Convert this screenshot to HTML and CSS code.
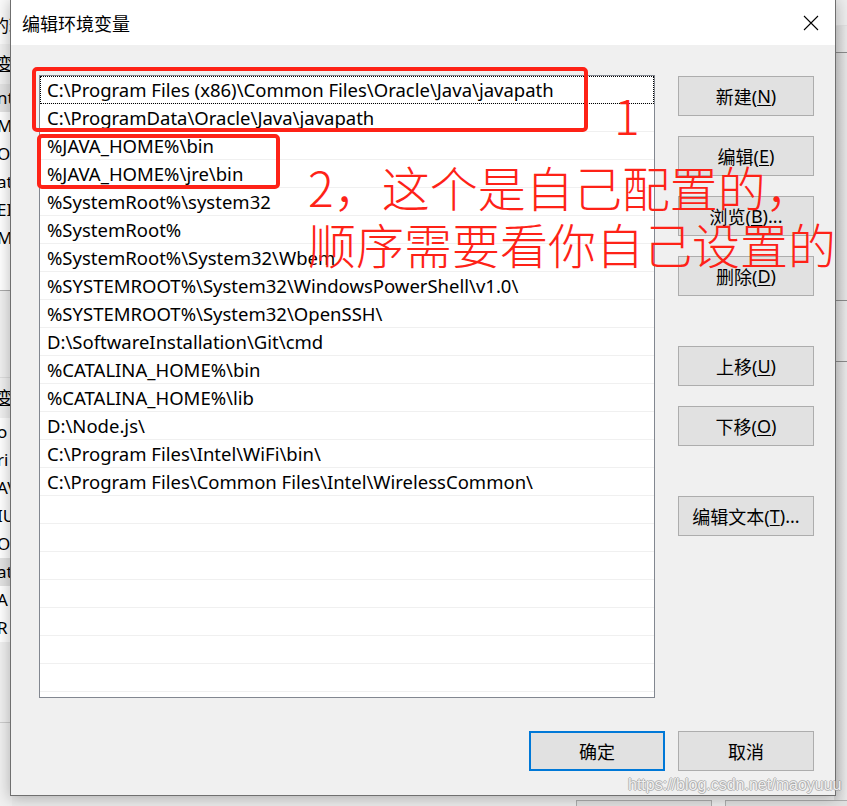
FILE: index.html
```html
<!DOCTYPE html>
<html lang="zh-CN">
<head>
<meta charset="utf-8">
<title>编辑环境变量</title>
<link rel="stylesheet" href="styles.css">
</head>
<body>
<div class="desktop">
  <div class="bg-left">
    <div class="bgl-title">的环境变量</div>
    <div class="bgl-group">变量</div>
    <div class="bgl-rows">
      <div class="bgl-row sel">ntel</div>
      <div class="bgl-row">MC</div>
      <div class="bgl-row">On</div>
      <div class="bgl-row">ath</div>
      <div class="bgl-row">EI</div>
      <div class="bgl-row">MP</div>
    </div>
    <div class="bgl-sep"></div>
    <div class="bgl-sep2"></div>
    <div class="bgl-group2">变量</div>
    <div class="bgl-rows">
      <div class="bgl-row">o</div>
      <div class="bgl-row">ri</div>
      <div class="bgl-row">AV</div>
      <div class="bgl-row">IU</div>
      <div class="bgl-row">OS</div>
      <div class="bgl-row sel">ath</div>
      <div class="bgl-row">A</div>
      <div class="bgl-row">R</div>
    </div>
    <div class="bgl-sep3"></div>
  </div>
  <div class="bg-right">
    <div class="bgr-a"></div>
    <div class="bgr-b"></div>
    <div class="bgr-c"></div>
    <div class="bgr-d"></div>
  </div>
  <div class="bg-bottom">
    <span class="bgbtn"></span>
    <span class="bgbtn"></span>
  </div>

  <div class="dialog">
    <div class="titlebar">
      <span class="title">编辑环境变量</span>
      <svg class="close" width="16" height="16" viewBox="0 0 16 16"><path d="M1 1 L15 15 M15 1 L1 15" stroke="#000" stroke-width="1.1" fill="none"/></svg>
    </div>
    <div class="body">
      <div class="main">
        <div class="listbox">
          <div class="row focus">C:\Program Files (x86)\Common Files\Oracle\Java\javapath</div>
          <div class="row">C:\ProgramData\Oracle\Java\javapath</div>
          <div class="row">%JAVA_HOME%\bin</div>
          <div class="row">%JAVA_HOME%\jre\bin</div>
          <div class="row">%SystemRoot%\system32</div>
          <div class="row">%SystemRoot%</div>
          <div class="row">%SystemRoot%\System32\Wbem</div>
          <div class="row">%SYSTEMROOT%\System32\WindowsPowerShell\v1.0\</div>
          <div class="row">%SYSTEMROOT%\System32\OpenSSH\</div>
          <div class="row">D:\SoftwareInstallation\Git\cmd</div>
          <div class="row">%CATALINA_HOME%\bin</div>
          <div class="row">%CATALINA_HOME%\lib</div>
          <div class="row">D:\Node.js\</div>
          <div class="row">C:\Program Files\Intel\WiFi\bin\</div>
          <div class="row">C:\Program Files\Common Files\Intel\WirelessCommon\</div>
          <div class="row"></div>
          <div class="row"></div>
          <div class="row"></div>
          <div class="row"></div>
          <div class="row"></div>
          <div class="row"></div>
          <div class="row"></div>
        </div>
        <div class="btncol">
          <div class="btn">新建(<u>N</u>)</div>
          <div class="btn">编辑(<u>E</u>)</div>
          <div class="btn">浏览(<u>B</u>)...</div>
          <div class="btn">删除(<u>D</u>)</div>
          <div class="btn spaced">上移(<u>U</u>)</div>
          <div class="btn">下移(<u>O</u>)</div>
          <div class="btn spaced">编辑文本(<u>T</u>)...</div>
        </div>
      </div>
      <div class="footer">
        <div class="btn fbtn default">确定</div>
        <div class="btn fbtn">取消</div>
      </div>
    </div>
  </div>

  <div class="anno box1"></div>
  <div class="anno box2"></div>
  <div class="anno-num">1</div>
  <div class="anno-text">2，这个是自己配置的，<br>顺序需要看你自己设置的</div>
  <div class="watermark">https://blog.csdn.net/maoyuuu</div>
</div>
</body>
</html>
```

FILE: styles.css
```css
html, body {
  margin: 0;
  padding: 0;
}
body {
  width: 847px;
  height: 806px;
  overflow: hidden;
  background: #ececec;
  font-family: "Noto Sans", "Noto Sans CJK SC", sans-serif;
}
.desktop {
  position: relative;
  width: 847px;
  height: 806px;
  overflow: hidden;
  background: #ececec;
}

/* ---- background window fragments ---- */
.bg-left {
  position: absolute;
  left: 0;
  top: 0;
  width: 12px;
  height: 806px;
  overflow: hidden;
  background: #f0f0f0;
  font-size: 17px;
  color: #000;
}
.bgl-title {
  height: 44px;
  line-height: 52px;
  margin-left: -8px;
  white-space: nowrap;
  background: #fafafa;
  font-size: 17px;
}
.bgl-group {
  height: 40px;
  line-height: 40px;
  margin-left: -4px;
  white-space: nowrap;
  text-decoration: underline;
}
.bgl-rows {
  display: flex;
  flex-direction: column;
  background: #fff;
}
.bgl-row {
  height: 28px;
  line-height: 28px;
  margin-left: -3px;
  white-space: nowrap;
}
.bgl-row.sel {
  background: #e3e3e3;
}
.bgl-sep {
  height: 38px;
  border-bottom: 1px solid #aaa;
  background: #fff;
}
.bgl-sep2 {
  height: 86px;
  border-bottom: 1px solid #ddd;
}
.bgl-group2 {
  height: 40px;
  line-height: 40px;
  margin-left: -4px;
  white-space: nowrap;
  text-decoration: underline;
}
.bgl-sep3 {
  height: 80px;
  border-bottom: 1px solid #ccc;
}

.bg-right {
  position: absolute;
  left: 834px;
  top: 0;
  width: 13px;
  height: 806px;
  background: linear-gradient(to right, #d6d6d6, #e9e9e9);
}
.bgr-a { height: 25px; border-bottom: 1px solid #e0e0e0; background: #ededed; }
.bgr-b { height: 26px; border-bottom: 1px solid #8a8a8a; }
.bgr-c { height: 247px; border-bottom: 1px solid #8a8a8a; background: linear-gradient(to right, #d2d2d2, #e6e6e6); }
.bgr-d { height: 60px; border-bottom: 1px solid #8a8a8a; }

.bg-bottom {
  position: absolute;
  left: 576px;
  top: 800px;
  display: flex;
  gap: 13px;
}
.bgbtn {
  width: 136px;
  height: 30px;
  box-sizing: border-box;
  border: 1px solid #adadad;
  background: #e1e1e1;
}

/* ---- dialog ---- */
.dialog {
  position: absolute;
  left: 10px;
  top: -1px;
  width: 826px;
  height: 797px;
  box-sizing: border-box;
  border: 1px solid #6f6f6f;
  background: #f0f0f0;
  box-shadow: 0 2px 14px rgba(0, 0, 0, 0.28);
  display: flex;
  flex-direction: column;
}
.titlebar {
  height: 45px;
  flex: none;
  background: #fff;
  display: flex;
  align-items: center;
  justify-content: space-between;
  padding: 0 16px 0 11px;
}
.title {
  font-size: 18px;
  color: #000;
}
.close {
  display: block;
}
.body {
  padding: 30px 21px 0 28px;
}
.main {
  display: flex;
  gap: 23px;
}
.listbox {
  width: 616px;
  height: 623px;
  box-sizing: border-box;
  border: 1px solid #828790;
  background: #fff;
  overflow: hidden;
  flex: none;
}
.row {
  height: 28px;
  box-sizing: border-box;
  border-bottom: 1px solid #f0f0f0;
  padding-left: 7px;
  font-size: 18.5px;
  line-height: 28px;
  white-space: nowrap;
  color: #000;
}
.row.focus {
  outline: 1px dotted #000;
  outline-offset: -1px;
}
.btncol {
  display: flex;
  flex-direction: column;
  width: 136px;
  padding-top: 1px;
}
.btn {
  height: 40px;
  box-sizing: border-box;
  border: 1px solid #adadad;
  background: #e1e1e1;
  font-size: 18px;
  color: #000;
  display: flex;
  align-items: center;
  justify-content: center;
  margin-bottom: 20px;
  white-space: nowrap;
}
.btn u {
  text-decoration-thickness: 1px;
  text-underline-offset: 2px;
}
.btn.spaced {
  margin-top: 30px;
}
.footer {
  display: flex;
  justify-content: flex-end;
  gap: 13px;
  margin-top: 33px;
}
.fbtn {
  width: 136px;
  margin-bottom: 0;
}
.fbtn.default {
  border: 2px solid #0078d7;
}

/* ---- annotations ---- */
.anno {
  position: absolute;
  box-sizing: border-box;
  border: 4px solid #fe2217;
  border-radius: 5px;
}
.box1 {
  left: 32px;
  top: 67px;
  width: 556px;
  height: 65px;
}
.box2 {
  left: 37px;
  top: 134px;
  width: 243px;
  height: 55px;
}
.anno-num,
.anno-text {
  position: absolute;
  font-family: "Noto Sans CJK SC", sans-serif;
  font-weight: 300;
  font-size: 48px;
  line-height: 57px;
  color: #fe2217;
  white-space: nowrap;
}
.anno-num {
  left: 614px;
  top: 86px;
}
.anno-text {
  left: 308px;
  top: 158px;
}
.watermark {
  position: absolute;
  left: 628px;
  top: 776px;
  font-family: "Liberation Sans", Arial, sans-serif;
  font-size: 16px;
  color: rgba(255, 255, 255, 0.85);
  text-shadow: 1px 0 0 rgba(150,150,150,0.6), -1px 0 0 rgba(150,150,150,0.6), 0 1px 0 rgba(150,150,150,0.6), 0 -1px 0 rgba(150,150,150,0.6);
  white-space: nowrap;
}
```
